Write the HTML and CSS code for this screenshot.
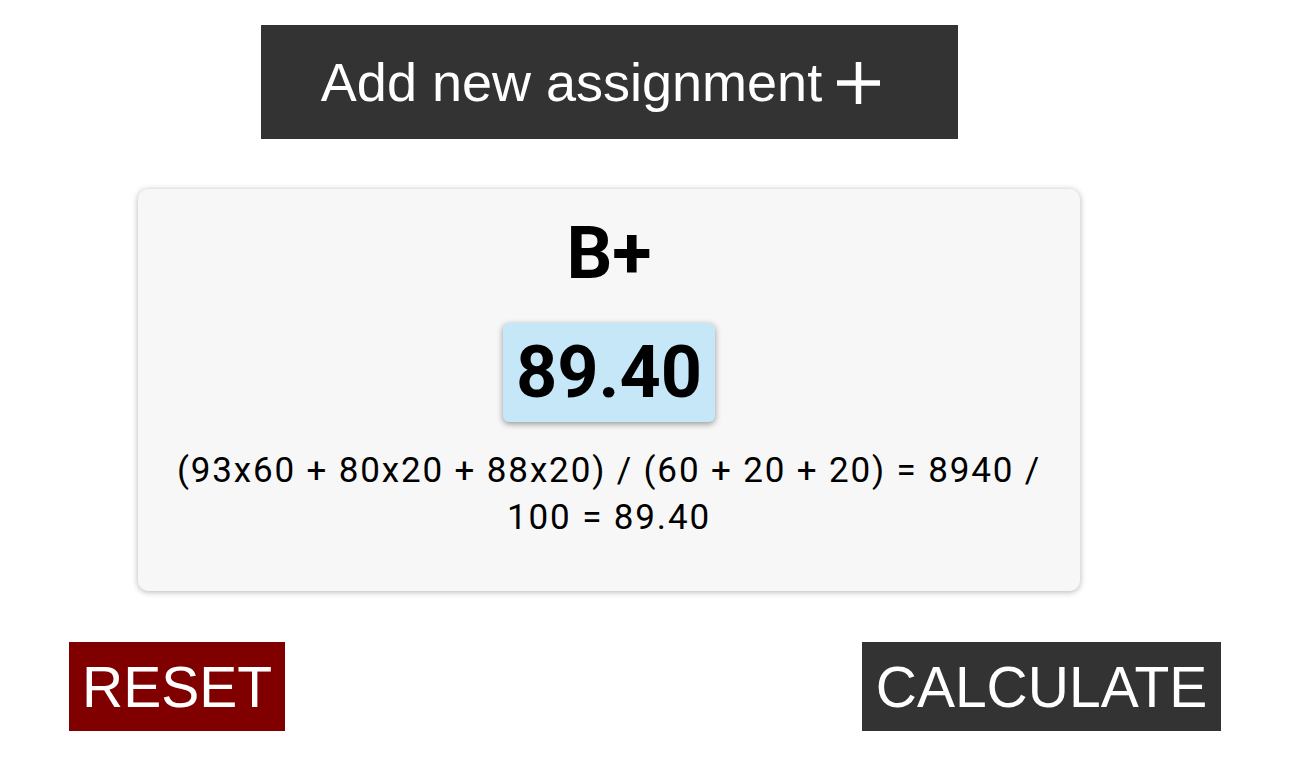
FILE: index.html
```html
<!DOCTYPE html>
<html>
<head>
<meta charset="utf-8">
<link rel="stylesheet" href="styles.css">
</head>
<body>
<div class="page">
  <div class="top">
    <button class="add-btn">Add new assignment<svg class="plus" viewBox="0 0 43 42" width="43" height="42"><path d="M21.5 0V42M0 21H43" stroke="#fff" stroke-width="5.5" fill="none"/></svg></button>
  </div>
  <div class="card">
    <div class="grade">B+</div>
    <div class="score">89.40</div>
    <div class="formula">(93x60 + 80x20 + 88x20) / (60 + 20 + 20) = 8940 / 100 = 89.40</div>
  </div>
  <div class="actions">
    <button class="btn reset">RESET</button>
    <button class="btn calc">CALCULATE</button>
  </div>
</div>
</body>
</html>
```
FILE: styles.css
```css
html, body {
  margin: 0;
  padding: 0;
  background: #fff;
}
.page {
  width: 1293px;
  padding-top: 25px;
}
.top {
  padding-left: 261px;
}
.add-btn {
  width: 697px;
  height: 114px;
  background: #333;
  color: #fff;
  border: none;
  font-family: "Liberation Sans", Arial, sans-serif;
  font-size: 54px;
  display: flex;
  align-items: center;
  justify-content: center;
  gap: 15px;
  padding: 0 18px 0 0;
  cursor: pointer;
}
.plus {
  display: block;
  margin-top: 2px;
}
.card {
  margin: 50px 0 0 138px;
  width: 942px;
  height: 402px;
  box-sizing: border-box;
  background: #f7f7f7;
  border-radius: 10px;
  box-shadow: 0 1px 6px rgba(0,0,0,0.3);
  padding: 23px 30px 0;
  display: flex;
  flex-direction: column;
  align-items: center;
  font-family: Roboto, sans-serif;
  color: #000;
}
.grade {
  font-size: 72px;
  font-weight: 700;
  line-height: 84px;
}
.score {
  margin-top: 27px;
  height: 99px;
  line-height: 99px;
  padding: 0 13px;
  font-size: 72px;
  font-weight: 700;
  background: #c6e7f7;
  border-radius: 6px;
  box-shadow: 0 2px 6px rgba(0,0,0,0.4);
}
.formula {
  margin-top: 25px;
  font-size: 35px;
  letter-spacing: 1.85px;
  line-height: 47px;
  text-align: center;
}
.actions {
  margin-top: 51px;
  display: flex;
  justify-content: space-between;
  padding: 0 72px 0 69px;
}
.btn {
  height: 89px;
  padding: 0;
  border: none;
  color: #fff;
  font-family: "Liberation Sans", Arial, sans-serif;
  font-size: 57px;
  text-align: center;
  cursor: pointer;
}
.reset {
  width: 216px;
  background: #800000;
}
.calc {
  width: 359px;
  background: #333;
}
```
